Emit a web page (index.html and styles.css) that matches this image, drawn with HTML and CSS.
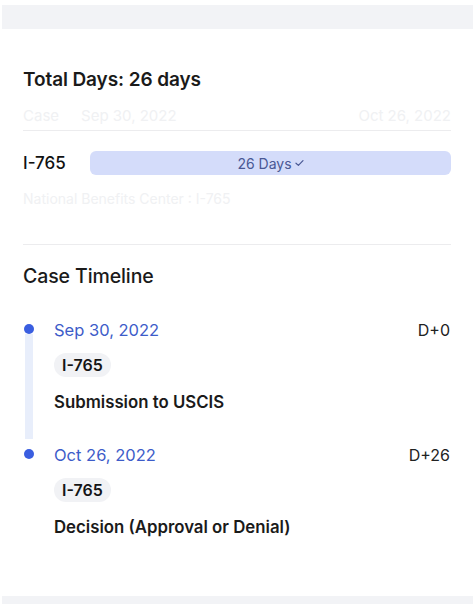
FILE: index.html
```html
<!DOCTYPE html>
<html>
<head>
<meta charset="utf-8">
<link rel="stylesheet" href="styles.css">
</head>
<body>
<div class="topbar"></div>
<section class="summary">
  <h2 class="title">Total Days: 26 days</h2>
  <div class="faded-row">
    <span class="faded case">Case</span>
    <span class="faded">Sep 30, 2022</span>
    <span class="faded end">Oct 26, 2022</span>
  </div>
  <div class="divider"></div>
  <div class="bar-row">
    <span class="form">I-765</span>
    <div class="bar"><span>26 Days</span><svg width="9" height="8" viewBox="0 0 9 8"><path d="M1 4.2 L3.4 6.4 L8 1.6" fill="none" stroke="#4a5894" stroke-width="1.2" stroke-linecap="round" stroke-linejoin="round"/></svg></div>
  </div>
  <div class="faded center">National Benefits Center : I-765</div>
  <div class="divider bottom"></div>
  <h2 class="title tl-title">Case Timeline</h2>
  <div class="timeline">
    <div class="tl-item">
      <div class="rail"><span class="dot"></span><span class="line"></span></div>
      <div class="tl-body">
        <div class="tl-head"><span class="date">Sep 30, 2022</span><span class="dday">D+0</span></div>
        <span class="chip">I-765</span>
        <div class="desc">Submission to USCIS</div>
      </div>
    </div>
    <div class="tl-item">
      <div class="rail"><span class="dot"></span></div>
      <div class="tl-body">
        <div class="tl-head"><span class="date">Oct 26, 2022</span><span class="dday">D+26</span></div>
        <span class="chip">I-765</span>
        <div class="desc">Decision (Approval or Denial)</div>
      </div>
    </div>
  </div>
</section>
<div class="bottombar"></div>
</body>
</html>
```

FILE: styles.css
```css
html, body {
  margin: 0;
  padding: 0;
  background: #ffffff;
}
body {
  width: 474px;
  height: 604px;
  overflow: hidden;
  font-family: Inter, "Noto Sans", sans-serif;
  color: #1b1b1b;
  display: flex;
  flex-direction: column;
}
.topbar {
  margin: 5px 1px 0 2px;
  height: 24px;
  background: #f2f3f6;
}
.summary {
  padding: 0 23px;
  flex: 1;
}
.title {
  margin: 0;
  font-size: 19px;
  font-weight: 600;
  line-height: 24px;
  letter-spacing: -0.1px;
  margin-top: 39px;
  color: #1a1a1a;
}
.faded-row {
  display: flex;
  gap: 22px;
  margin-top: 12px;
  height: 22px;
  align-items: center;
}
.faded {
  color: #f0f1f3;
  font-size: 15px;
}
.faded-row .end {
  margin-left: auto;
}
.divider {
  height: 1px;
  background: #ececee;
  margin-top: 4px;
}
.bar-row {
  display: flex;
  align-items: center;
  margin-top: 20px;
  height: 24px;
}
.form {
  width: 67px;
  font-size: 17px;
  font-weight: 500;
  color: #111;
}
.bar {
  flex: 1;
  height: 24px;
  background: #d4dcfa;
  border-radius: 6px;
  display: flex;
  align-items: center;
  justify-content: center;
  gap: 3px;
  color: #4a5894;
  font-size: 14px;
}
.faded.center {
  margin-top: 13px;
  height: 22px;
  line-height: 22px;
  font-size: 14px;
}
.divider.bottom {
  margin-top: 34px;
}
.tl-title {
  font-size: 19.5px;
  font-weight: 500;
  margin-top: 19px;
}
.timeline {
  margin-top: 31px;
}
.tl-item {
  display: flex;
}
.rail {
  width: 31px;
  display: flex;
  flex-direction: column;
  align-items: flex-start;
  padding-top: 5px;
}
.dot {
  width: 10px;
  height: 10px;
  border-radius: 50%;
  background: #3a5ee0;
  margin-left: 1px;
}
.line {
  flex: 1;
  width: 8px;
  margin-left: 2px;
  background: #e8eefb;
  margin-bottom: 5px;
}
.tl-body {
  flex: 1;
  display: flex;
  flex-direction: column;
  align-items: flex-start;
}
.tl-head {
  align-self: stretch;
  display: flex;
  justify-content: space-between;
  align-items: center;
  height: 22px;
}
.date {
  color: #3d5cc9;
  font-size: 16.5px;
}
.dday {
  font-size: 16px;
  color: #222;
  margin-right: 1px;
}
.chip {
  margin-top: 12px;
  height: 24px;
  line-height: 24px;
  padding: 0 8px;
  background: #f1f2f5;
  border-radius: 12px;
  font-size: 16px;
  font-weight: 600;
  color: #151515;
}
.desc {
  margin-top: 15px;
  font-size: 16.8px;
  font-weight: 600;
  color: #1a1a1a;
  line-height: 20px;
  padding-bottom: 32px;
}
.bottombar {
  height: 8px;
  margin: 0 1px 0 2px;
  background: #f2f3f6;
}
```
